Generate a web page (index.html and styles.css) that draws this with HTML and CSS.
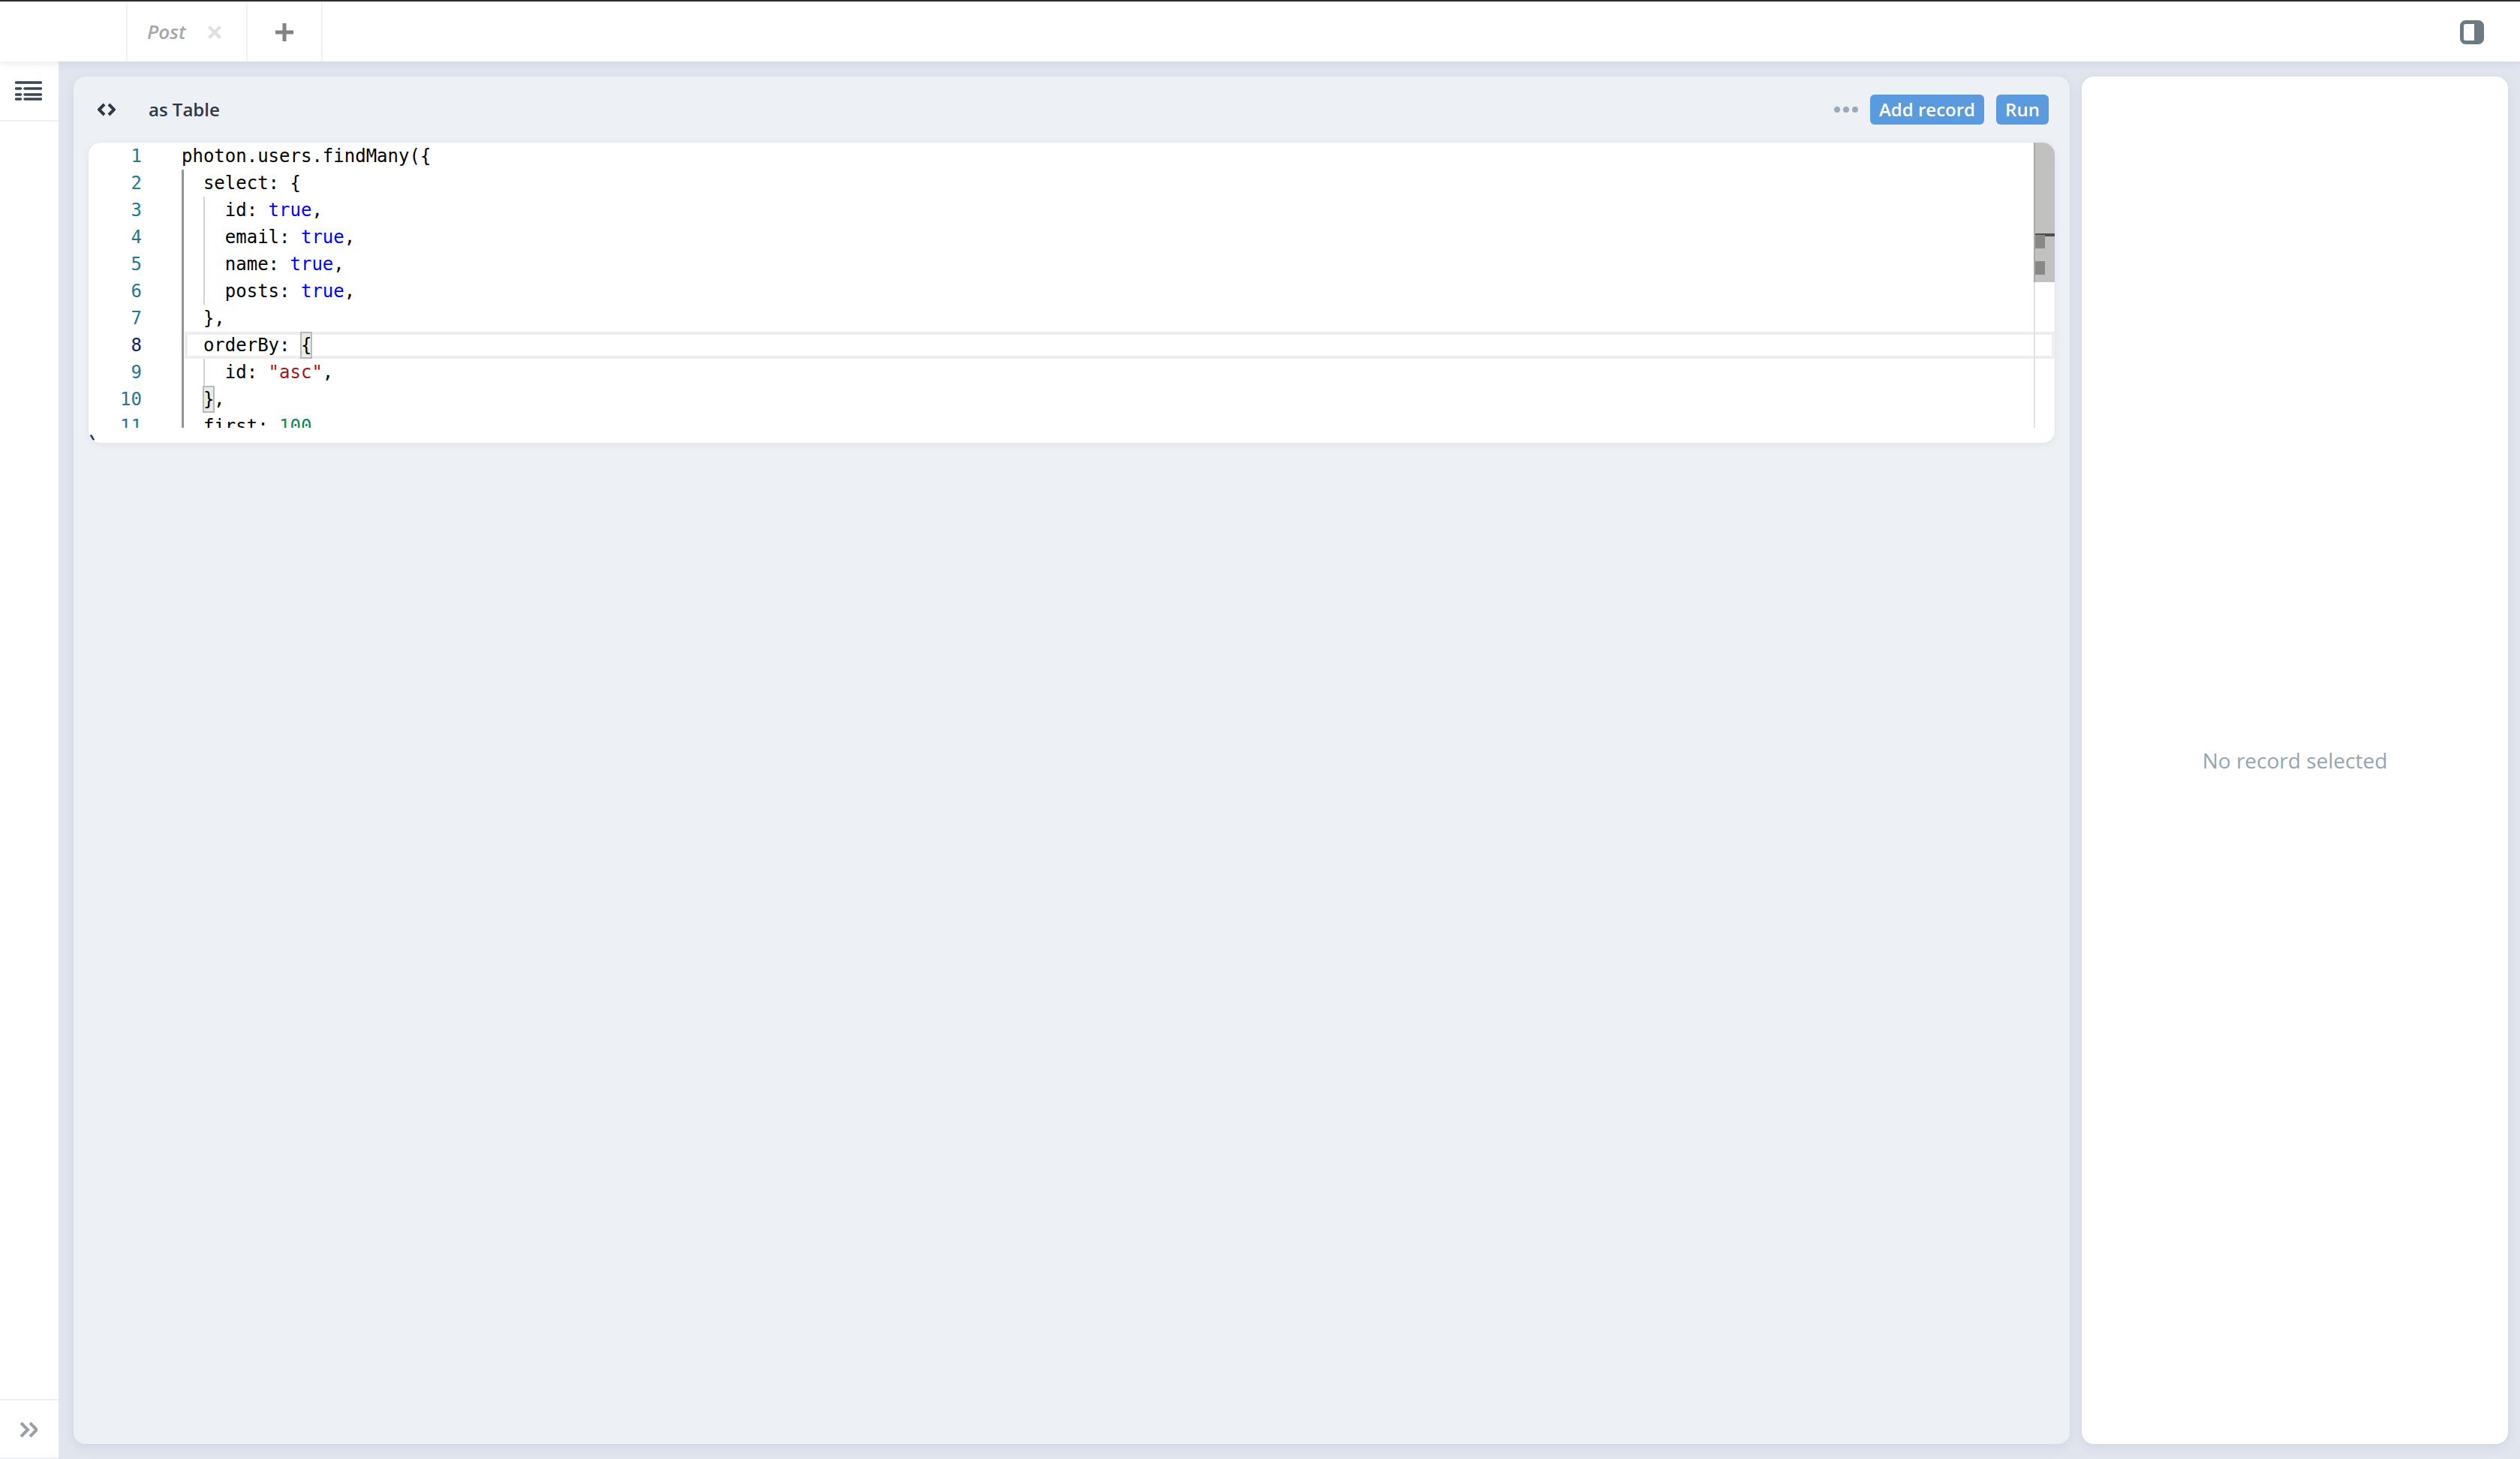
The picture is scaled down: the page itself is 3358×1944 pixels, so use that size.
FILE: index.html
```html
<!DOCTYPE html>
<html lang="en">
<head>
<meta charset="utf-8">
<title>Post</title>
<link rel="stylesheet" href="styles.css">
</head>
<body>
<div class="app">
  <header class="topbar">
    <div class="tab-spacer"></div>
    <div class="tab">
      <span class="tab-name">Post</span>
      <svg class="tab-close" width="18" height="18" viewBox="0 0 18 18"><path d="M1.5 1.5l15 15M16.500 1.500l-15 15"/></svg>
    </div>
    <div class="tab-add">
      <svg width="24" height="24" viewBox="0 0 24 24"><path d="M12 1v22M1 12h22"/></svg>
    </div>
    <div class="topbar-fill"></div>
    <svg class="pane-toggle" width="32" height="32" viewBox="0 0 32 32"><rect x="2.500" y="2.500" width="27" height="27" rx="5"/><path class="pane-fill" d="M19 1h6a6 6 0 0 1 6 6v18a6 6 0 0 1-6 6h-6z"/></svg>
  </header>
  <div class="body">
    <nav class="sidebar">
      <div class="side-top">
        <svg width="36" height="26" viewBox="0 0 36 26"><path d="M1.500 2h33M13 10h21.500M1.500 10h6M13 18h21.500M1.500 18h6M13 24h21.500M1.500 24h6" class="list-icon"/></svg>
      </div>
      <div class="side-fill"></div>
      <div class="side-bottom">
        <svg width="24" height="22" viewBox="0 0 24 22"><path d="M2 2l9 9-9 9M14 2l9 9-9 9"/></svg>
      </div>
    </nav>
    <main class="main">
      <section class="panel">
        <div class="panel-head">
          <svg class="code-icon" width="24" height="18" viewBox="0 0 24 18"><path d="M9 2L2 9l7 7M15 2l7 7-7 7"/></svg>
          <span class="panel-title">as Table</span>
          <div class="head-fill"></div>
          <div class="dots"><i></i><i></i><i></i></div>
          <button class="btn btn-add">Add record</button>
          <button class="btn btn-run">Run</button>
        </div>
        <div class="editor">
          <div class="viewport">
            <div class="gutter">
              <div>1</div><div>2</div><div>3</div><div>4</div><div>5</div><div>6</div><div>7</div><div class="cur">8</div><div>9</div><div>10</div><div>11</div>
            </div>
            <div class="code">
              <div class="ln">photon.users.findMany({</div>
              <div class="guide">
                <div class="ln">select: {</div>
                <div class="guide guide2">
                  <div class="ln">id: <span class="kw">true</span>,</div>
                  <div class="ln">email: <span class="kw">true</span>,</div>
                  <div class="ln">name: <span class="kw">true</span>,</div>
                  <div class="ln">posts: <span class="kw">true</span>,</div>
                </div>
                <div class="ln">},</div>
                <div class="ln current">orderBy: <span class="match">{</span></div>
                <div class="guide guide2">
                  <div class="ln">id: <span class="str">"asc"</span>,</div>
                </div>
                <div class="ln"><span class="match">}</span>,</div>
                <div class="ln">first: <span class="num">100</span></div>
              </div>
            </div>
            <div class="ruler">
              <div class="ruler-slider">
                <i class="ruler-line"></i>
                <i class="ruler-mark"></i>
                <i class="ruler-mark ruler-mark2"></i>
              </div>
            </div>
          </div>
          <svg class="corner-mark" width="6" height="8" viewBox="0 0 6 8"><path d="M1 0.500l4 7"/></svg>
        </div>
      </section>
      <aside class="detail">No record selected</aside>
    </main>
  </div>
</div>
</body>
</html>
```

FILE: styles.css
```css
* { box-sizing: border-box; }
html, body { margin: 0; padding: 0; height: 100%; }
body { font-family: "Open Sans", sans-serif; background: #e1e5ee; overflow: hidden; }
.app { display: flex; flex-direction: column; height: 1944px; }

.topbar { display: flex; align-items: center; height: 82px; flex: none; background: #fff; border-top: 2px solid #2b2b2b; position: relative; z-index: 2; box-shadow: 0 2px 10px rgba(120, 135, 165, .18); }
.tab-spacer { width: 168px; }
.tab { display: flex; align-items: center; width: 162px; height: 100%; padding-left: 26px; border-left: 2px solid #eef1f5; border-right: 2px solid #eef1f5; }
.tab-name { width: 81px; font-size: 26px; font-style: italic; font-weight: 600; color: #a3a8af; line-height: 1; }
.tab-close { fill: none; stroke: #dde0e5; stroke-width: 4; margin-top: 2px; }
.tab-add { display: flex; align-items: center; justify-content: center; width: 100px; height: 100%; border-right: 2px solid #eef1f5; }
.tab-add svg { fill: none; stroke: #808285; stroke-width: 5; stroke-linecap: round; margin-top: 1px; }
.topbar-fill { flex: 1; }
.pane-toggle { margin-right: 48px; margin-top: 2px; }
.pane-toggle rect { fill: #fff; stroke: #6e7a82; stroke-width: 5; }
.pane-fill { fill: #6e7a82; }

.body { display: flex; flex: 1; min-height: 0; }
.sidebar { display: flex; flex-direction: column; width: 78px; flex: none; background: #fff; border-bottom: 2px solid #edf0f5; }
.side-top { display: flex; justify-content: center; height: 80px; padding-top: 26px; border-bottom: 2px solid #edf0f5; }
.side-top svg { display: block; margin-left: -2px; }
.list-icon { fill: none; stroke: #3a4354; stroke-width: 3.500; stroke-linecap: round; }
.side-fill { flex: 1; }
.side-bottom { display: flex; align-items: center; justify-content: center; height: 78px; border-top: 2px solid #edf0f5; }
.side-bottom svg { fill: none; stroke: #9a9ea6; stroke-width: 4; margin: 2px 0 0 -2px; }

.main { display: flex; flex: 1; min-width: 0; gap: 16px; padding: 20px 16px 20px 20px; }
.panel { flex: 1; min-width: 0; padding: 0 20px; background: #edf0f5; border-radius: 16px; box-shadow: 0 4px 14px rgba(120, 135, 165, .16); }
.panel-head { display: flex; align-items: center; height: 88px; padding: 0 8px 0 12px; }
.code-icon { fill: none; stroke: #2f3848; stroke-width: 4; flex: none; }
.panel-title { margin-left: 44px; font-size: 24px; font-weight: 600; color: #2f3848; line-height: 1; }
.head-fill { flex: 1; }
.dots { display: flex; gap: 4px; margin-right: 16px; }
.dots i { width: 8px; height: 8px; border-radius: 50%; background: #9aaab6; }
.btn { height: 40px; padding: 0; border: 0; border-radius: 6px; background: #5a9ade; color: #fff; font-family: inherit; font-size: 24px; font-weight: 600; line-height: 1; }
.btn-add { width: 152px; }
.btn-run { width: 70px; margin-left: 16px; }

.editor { position: relative; height: 400px; background: #fff; border-radius: 16px; overflow: hidden; box-shadow: 0 2px 10px rgba(120, 135, 165, .12); }
.viewport { display: flex; height: 380px; overflow: hidden; position: relative; font-family: "DejaVu Sans Mono", monospace; font-size: 24px; line-height: 36px; color: #000; }
.gutter { width: 124px; flex: none; padding-right: 53px; text-align: right; color: #237893; }
.gutter .cur { color: #0b216f; }
.code { flex: 1; min-width: 0; }
.ln { height: 36px; white-space: pre; }
.guide { border-left: 3px solid #939393; padding-left: calc(2ch - 3px); }
.guide2 { border-left: 2px solid #d3d3d3; padding-left: calc(2ch - 2px); }
.current { margin-left: calc(-2ch + 4px); padding-left: calc(2ch - 8px); border: 4px solid #eee; line-height: 28px; }
.kw { color: #0000ff; }
.str { color: #a31515; }
.num { color: #09885a; }
.match { display: inline-block; width: 16px; margin: 0 -1px; height: 36px; vertical-align: top; background: #e8ede4; border: 2px solid #b9b9b9; line-height: 32px; text-indent: -1px; }
.current .match { margin-top: -4px; }

.ruler { position: absolute; top: 0; right: 0; bottom: 0; width: 28px; border-left: 2px solid #e2e2e2; }
.ruler-slider { position: relative; height: 186px; margin-left: -2px; background: #c1c1c0; border-left: 2px solid #a9a9a9; }
.ruler-line { position: absolute; left: 0; right: 0; top: 121px; height: 4px; background: #4f4f4f; }
.ruler-mark { position: absolute; left: 0; width: 13px; top: 123px; height: 18px; background: #888; }
.ruler-mark2 { top: 158px; }
.corner-mark { position: absolute; left: 2px; top: 389px; fill: none; stroke: #2a3450; stroke-width: 2.500; }

.detail { display: flex; align-items: center; justify-content: center; width: 568px; flex: none; background: #fff; border-radius: 16px; font-size: 28px; color: #92a5b2; box-shadow: 0 4px 14px rgba(120, 135, 165, .16); }
```
